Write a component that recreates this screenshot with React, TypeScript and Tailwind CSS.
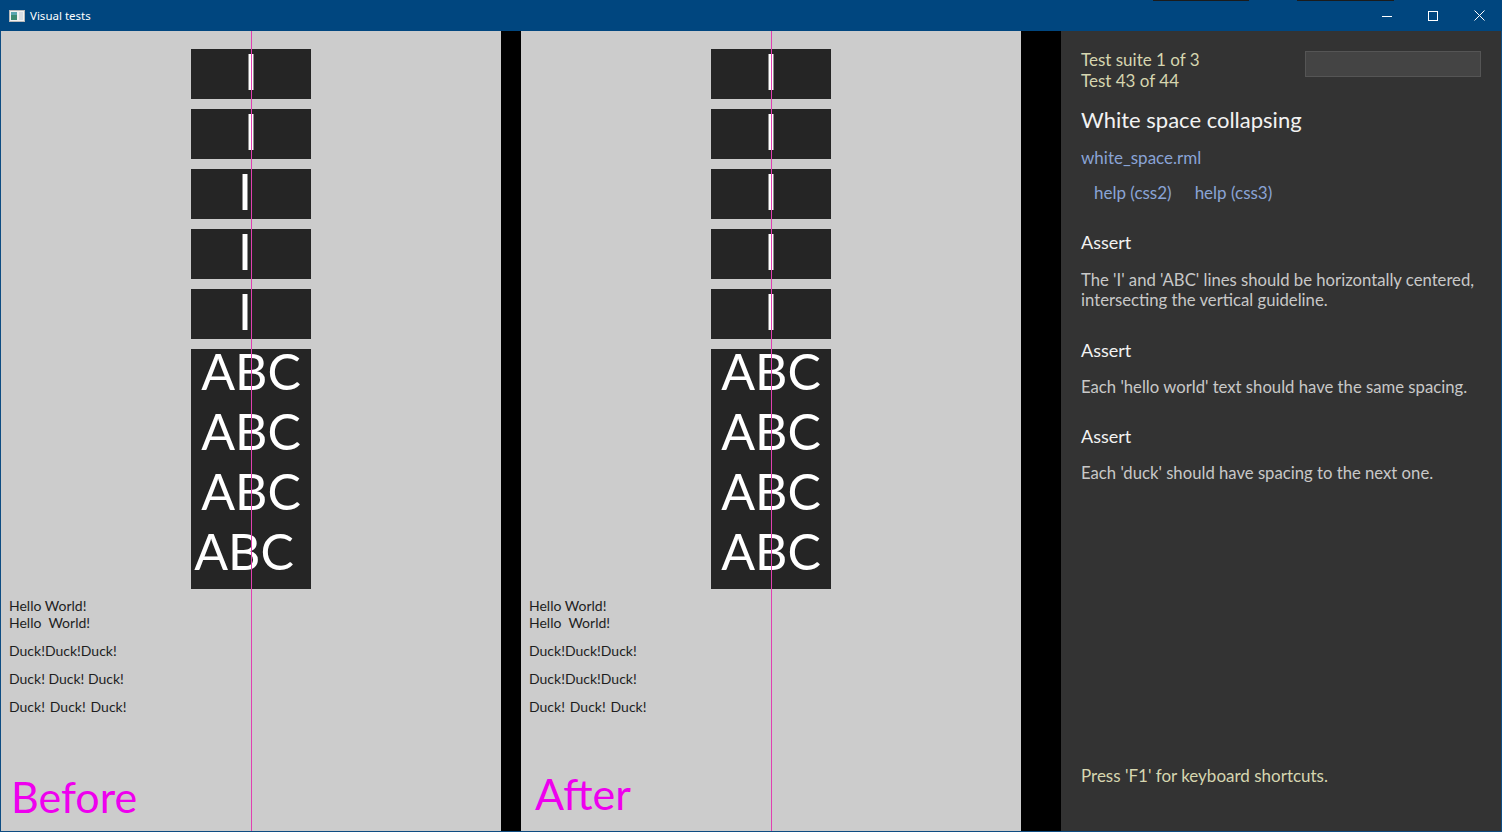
import React from "react";

const lato = { fontFamily: "Lato, 'Noto Sans', sans-serif" };

type Row = { text: string; shift?: boolean };

const TitleBar = () => (
  <div className="relative h-[31px] shrink-0 bg-[#00467f] flex items-center text-white">
    <span className="absolute top-0 left-[1153px] w-[96px] h-px bg-[#1b1b1b]" />
    <span className="absolute top-0 left-[1297px] w-[97px] h-px bg-[#1b1b1b]" />
    <svg className="ml-[9px]" width="16" height="12" viewBox="0 0 16 12">
      <rect x="0.5" y="0.5" width="15" height="11" fill="#f2f2f2" stroke="#b9b9b9" />
      <rect x="2" y="2" width="6" height="8" fill="#3d8a73" />
      <rect x="2" y="2" width="6" height="3" fill="#5aa6b0" />
      <rect x="10" y="2" width="4" height="8" fill="#d7dde3" />
    </svg>
    <span className="ml-[5px] text-[11.5px]" style={{ fontFamily: "'Noto Sans', 'Open Sans', sans-serif" }}>
      Visual tests
    </span>
    <div className="ml-auto flex h-full">
      <div className="w-[46px] h-full flex items-center justify-center">
        <svg width="10" height="10" viewBox="0 0 10 10">
          <line x1="0" y1="5.5" x2="10" y2="5.5" stroke="white" strokeWidth="1" />
        </svg>
      </div>
      <div className="w-[46px] h-full flex items-center justify-center">
        <svg width="10" height="10" viewBox="0 0 10 10">
          <rect x="0.5" y="0.5" width="9" height="9" fill="none" stroke="white" strokeWidth="1" />
        </svg>
      </div>
      <div className="w-[46px] h-full flex items-center justify-center">
        <svg width="11" height="11" viewBox="0 0 11 11">
          <path d="M0.5 0.5 L10.5 10.5 M10.5 0.5 L0.5 10.5" stroke="white" strokeWidth="1" />
        </svg>
      </div>
    </div>
  </div>
);

const TestPanel = ({
  bars,
  abc,
  ducks,
  label,
  labelClass,
}: {
  bars: Row[];
  abc: Row[];
  ducks: { text: string; wide?: boolean }[];
  label: string;
  labelClass: string;
}) => (
  <div className="relative w-[500px] shrink-0 bg-[#cccccc] flex flex-col" style={lato}>
    <div className="flex flex-col items-center gap-[10px] pt-[18px]">
      {bars.map((b, i) => (
        <div key={i} className="w-[120px] h-[50px] bg-[#252525] text-white text-[50px] leading-[60px]">
          <div className={"-mt-[8px] text-center " + (b.shift ? "pr-[12px]" : "")}>{b.text}</div>
        </div>
      ))}
      <div className="w-[120px] h-[240px] bg-[#252525] text-white text-[50px] leading-[60px]">
        <div className="-mt-[8px]">
          {abc.map((r, i) => (
            <div key={i} className={"text-center " + (r.shift ? "pr-[14px]" : "")}>
              {r.text}
            </div>
          ))}
        </div>
      </div>
    </div>
    <div className="px-[8px] pt-[8px] text-[14px] leading-[17px] text-[#1e1e1e] whitespace-pre">
      <p className="mb-[11px]">
        Hello World!
        <br />
        Hello  World!
      </p>
      {ducks.map((d, i) => (
        <p key={i} className={"mb-[11px] " + (d.wide ? "[word-spacing:1.3px]" : "")}>
          {d.text}
        </p>
      ))}
    </div>
    <div className={"mt-auto text-[#ee00ee] text-[43px] leading-normal " + labelClass}>{label}</div>
    <div className="absolute left-[250px] top-0 bottom-0 w-px bg-[#e040b0] z-10" />
  </div>
);

const Sidebar = () => (
  <div className="w-[440px] shrink-0 bg-[#333333] flex flex-col px-[20px] pt-[18px] pb-[45px]" style={lato}>
    <div className="flex items-start justify-between">
      <div className="text-[17px] leading-[21px] text-[#d6d6b0]">
        <div>Test suite 1 of 3</div>
        <div>Test 43 of 44</div>
      </div>
      <div className="mt-[2px] w-[176px] h-[26px] bg-[#444444] border border-[#555555]" />
    </div>
    <div className="mt-[16px] text-[22px] leading-[26px] text-[#f2f2f2]">White space collapsing</div>
    <div className="mt-[12px] text-[17px] leading-normal text-[#8aa4d6]">white_space.rml</div>
    <div className="mt-[9px] flex gap-[23px] pl-[13px] text-[17px] leading-normal text-[#8aa4d6]">
      <span>help (css2)</span>
      <span>help (css3)</span>
    </div>
    <div className="mt-[24px] text-[18px] leading-normal text-[#f2f2f2]">Assert</div>
    <p className="mt-[14px] text-[16.7px] leading-[20px] text-[#c8c8c8]">
      The 'I' and 'ABC' lines should be horizontally centered, intersecting the vertical guideline.
    </p>
    <div className="mt-[27px] text-[18px] leading-normal text-[#f2f2f2]">Assert</div>
    <p className="mt-[13px] text-[16.7px] leading-[20px] text-[#c8c8c8]">
      Each 'hello world' text should have the same spacing.
    </p>
    <div className="mt-[26px] text-[18px] leading-normal text-[#f2f2f2]">Assert</div>
    <p className="mt-[13px] text-[16.7px] leading-[20px] text-[#c8c8c8]">
      Each 'duck' should have spacing to the next one.
    </p>
    <div className="mt-auto text-[17px] leading-[20px] text-[#d6d6b0]">Press 'F1' for keyboard shortcuts.</div>
  </div>
);

export default function App() {
  return (
    <div className="w-[1502px] h-[832px] bg-[#0e4c82] flex flex-col overflow-hidden">
      <TitleBar />
      <div className="flex flex-1 min-h-0 mx-px mb-px bg-black">
        <TestPanel
          bars={[{ text: "I" }, { text: "I" }, { text: "I", shift: true }, { text: "I", shift: true }, { text: "I", shift: true }]}
          abc={[{ text: "ABC" }, { text: "ABC" }, { text: "ABC" }, { text: "ABC", shift: true }]}
          ducks={[{ text: "Duck!Duck!Duck!" }, { text: "Duck! Duck! Duck!" }, { text: "Duck! Duck! Duck!", wide: true }]}
          label="Before"
          labelClass="pl-[10px] pb-[2px]"
        />
        <div className="w-[20px] shrink-0" />
        <TestPanel
          bars={[{ text: "I" }, { text: "I" }, { text: "I" }, { text: "I" }, { text: "I" }]}
          abc={[{ text: "ABC" }, { text: "ABC" }, { text: "ABC" }, { text: "ABC" }]}
          ducks={[{ text: "Duck!Duck!Duck!" }, { text: "Duck!Duck!Duck!" }, { text: "Duck! Duck! Duck!", wide: true }]}
          label="After"
          labelClass="pl-[14px] pb-[5px]"
        />
        <div className="w-[40px] shrink-0" />
        <Sidebar />
      </div>
    </div>
  );
}
